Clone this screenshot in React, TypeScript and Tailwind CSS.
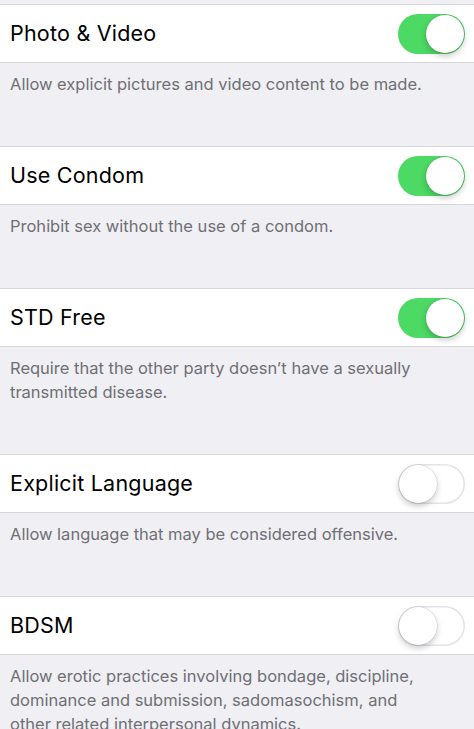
import React, { useState } from 'react';

type Setting = {
  id: string;
  title: string;
  description: string;
  enabled: boolean;
};

const initialSettings: Setting[] = [
  {
    id: 'photo',
    title: 'Photo & Video',
    description: 'Allow explicit pictures and video content to be made.',
    enabled: true,
  },
  {
    id: 'condom',
    title: 'Use Condom',
    description: 'Prohibit sex without the use of a condom.',
    enabled: true,
  },
  {
    id: 'std',
    title: 'STD Free',
    description: 'Require that the other party doesn’t have a sexually transmitted disease.',
    enabled: true,
  },
  {
    id: 'language',
    title: 'Explicit Language',
    description: 'Allow language that may be considered offensive.',
    enabled: false,
  },
  {
    id: 'bdsm',
    title: 'BDSM',
    description:
      'Allow erotic practices involving bondage, discipline, dominance and submission, sadomasochism, and other related interpersonal dynamics.',
    enabled: false,
  },
];

const Toggle: React.FC<{ on: boolean; onChange: () => void }> = ({ on, onChange }) => (
  <button
    onClick={onChange}
    className={`relative h-[40px] w-[67px] shrink-0 rounded-full transition-colors ${
      on ? 'bg-[#4cd964]' : 'bg-white shadow-[inset_0_0_0_1.5px_#e3e3e8]'
    }`}
  >
    <span
      className={`absolute top-[1px] h-[38px] w-[38px] rounded-full bg-white shadow-[0_3px_6px_rgba(0,0,0,0.22),0_0_0_0.5px_rgba(0,0,0,0.12)] transition-all ${
        on ? 'left-[28px]' : 'left-[1px]'
      }`}
    />
  </button>
);

const App: React.FC = () => {
  const [settings, setSettings] = useState<Setting[]>(initialSettings);

  const toggle = (id: string) => {
    setSettings((prev) => prev.map((s) => (s.id === id ? { ...s, enabled: !s.enabled } : s)));
  };

  return (
    <div className="h-[729px] overflow-hidden bg-[#efeff4] pt-[4px] font-['Inter',sans-serif] antialiased">
      {settings.map((item) => (
        <div key={item.id}>
          <div className="flex h-[59px] items-center justify-between border-y border-[#d6d6db] bg-white pl-[10px] pr-[9px]">
            <span className="text-[21.5px] tracking-[0.01em] text-black">{item.title}</span>
            <Toggle on={item.enabled} onChange={() => toggle(item.id)} />
          </div>
          <p className="pb-[50px] pl-[10px] pr-[36px] pt-[9px] text-[16.5px] leading-[24px] text-[#707075]">
            {item.description}
          </p>
        </div>
      ))}
    </div>
  );
};

export default App;
